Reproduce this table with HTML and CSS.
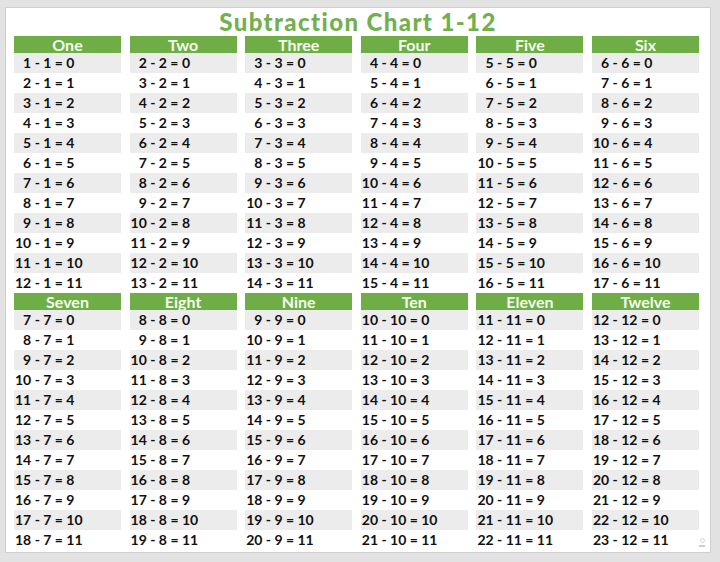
FILE: index.html
```html
<!DOCTYPE html>
<html lang="en">
<head>
<meta charset="utf-8">
<title>Subtraction Chart 1-12</title>
<link rel="stylesheet" href="styles.css">
</head>
<body>
<div class="sheet">
  <h1 class="title">Subtraction Chart 1-12</h1>
  <div class="band">
    <div class="col">
      <div class="head">One</div>
      <div class="row s">1 - 1 = 0</div><div class="row s">2 - 1 = 1</div><div class="row s">3 - 1 = 2</div><div class="row s">4 - 1 = 3</div><div class="row s">5 - 1 = 4</div><div class="row s">6 - 1 = 5</div><div class="row s">7 - 1 = 6</div><div class="row s">8 - 1 = 7</div><div class="row s">9 - 1 = 8</div><div class="row">10 - 1 = 9</div><div class="row">11 - 1 = 10</div><div class="row">12 - 1 = 11</div>
    </div>
    <div class="col">
      <div class="head">Two</div>
      <div class="row s">2 - 2 = 0</div><div class="row s">3 - 2 = 1</div><div class="row s">4 - 2 = 2</div><div class="row s">5 - 2 = 3</div><div class="row s">6 - 2 = 4</div><div class="row s">7 - 2 = 5</div><div class="row s">8 - 2 = 6</div><div class="row s">9 - 2 = 7</div><div class="row">10 - 2 = 8</div><div class="row">11 - 2 = 9</div><div class="row">12 - 2 = 10</div><div class="row">13 - 2 = 11</div>
    </div>
    <div class="col">
      <div class="head">Three</div>
      <div class="row s">3 - 3 = 0</div><div class="row s">4 - 3 = 1</div><div class="row s">5 - 3 = 2</div><div class="row s">6 - 3 = 3</div><div class="row s">7 - 3 = 4</div><div class="row s">8 - 3 = 5</div><div class="row s">9 - 3 = 6</div><div class="row">10 - 3 = 7</div><div class="row">11 - 3 = 8</div><div class="row">12 - 3 = 9</div><div class="row">13 - 3 = 10</div><div class="row">14 - 3 = 11</div>
    </div>
    <div class="col">
      <div class="head">Four</div>
      <div class="row s">4 - 4 = 0</div><div class="row s">5 - 4 = 1</div><div class="row s">6 - 4 = 2</div><div class="row s">7 - 4 = 3</div><div class="row s">8 - 4 = 4</div><div class="row s">9 - 4 = 5</div><div class="row">10 - 4 = 6</div><div class="row">11 - 4 = 7</div><div class="row">12 - 4 = 8</div><div class="row">13 - 4 = 9</div><div class="row">14 - 4 = 10</div><div class="row">15 - 4 = 11</div>
    </div>
    <div class="col">
      <div class="head">Five</div>
      <div class="row s">5 - 5 = 0</div><div class="row s">6 - 5 = 1</div><div class="row s">7 - 5 = 2</div><div class="row s">8 - 5 = 3</div><div class="row s">9 - 5 = 4</div><div class="row">10 - 5 = 5</div><div class="row">11 - 5 = 6</div><div class="row">12 - 5 = 7</div><div class="row">13 - 5 = 8</div><div class="row">14 - 5 = 9</div><div class="row">15 - 5 = 10</div><div class="row">16 - 5 = 11</div>
    </div>
    <div class="col">
      <div class="head">Six</div>
      <div class="row s">6 - 6 = 0</div><div class="row s">7 - 6 = 1</div><div class="row s">8 - 6 = 2</div><div class="row s">9 - 6 = 3</div><div class="row">10 - 6 = 4</div><div class="row">11 - 6 = 5</div><div class="row">12 - 6 = 6</div><div class="row">13 - 6 = 7</div><div class="row">14 - 6 = 8</div><div class="row">15 - 6 = 9</div><div class="row">16 - 6 = 10</div><div class="row">17 - 6 = 11</div>
    </div>
  </div>
  <div class="band">
    <div class="col">
      <div class="head">Seven</div>
      <div class="row s">7 - 7 = 0</div><div class="row s">8 - 7 = 1</div><div class="row s">9 - 7 = 2</div><div class="row">10 - 7 = 3</div><div class="row">11 - 7 = 4</div><div class="row">12 - 7 = 5</div><div class="row">13 - 7 = 6</div><div class="row">14 - 7 = 7</div><div class="row">15 - 7 = 8</div><div class="row">16 - 7 = 9</div><div class="row">17 - 7 = 10</div><div class="row">18 - 7 = 11</div>
    </div>
    <div class="col">
      <div class="head">Eight</div>
      <div class="row s">8 - 8 = 0</div><div class="row s">9 - 8 = 1</div><div class="row">10 - 8 = 2</div><div class="row">11 - 8 = 3</div><div class="row">12 - 8 = 4</div><div class="row">13 - 8 = 5</div><div class="row">14 - 8 = 6</div><div class="row">15 - 8 = 7</div><div class="row">16 - 8 = 8</div><div class="row">17 - 8 = 9</div><div class="row">18 - 8 = 10</div><div class="row">19 - 8 = 11</div>
    </div>
    <div class="col">
      <div class="head">Nine</div>
      <div class="row s">9 - 9 = 0</div><div class="row">10 - 9 = 1</div><div class="row">11 - 9 = 2</div><div class="row">12 - 9 = 3</div><div class="row">13 - 9 = 4</div><div class="row">14 - 9 = 5</div><div class="row">15 - 9 = 6</div><div class="row">16 - 9 = 7</div><div class="row">17 - 9 = 8</div><div class="row">18 - 9 = 9</div><div class="row">19 - 9 = 10</div><div class="row">20 - 9 = 11</div>
    </div>
    <div class="col">
      <div class="head">Ten</div>
      <div class="row">10 - 10 = 0</div><div class="row">11 - 10 = 1</div><div class="row">12 - 10 = 2</div><div class="row">13 - 10 = 3</div><div class="row">14 - 10 = 4</div><div class="row">15 - 10 = 5</div><div class="row">16 - 10 = 6</div><div class="row">17 - 10 = 7</div><div class="row">18 - 10 = 8</div><div class="row">19 - 10 = 9</div><div class="row">20 - 10 = 10</div><div class="row">21 - 10 = 11</div>
    </div>
    <div class="col">
      <div class="head">Eleven</div>
      <div class="row">11 - 11 = 0</div><div class="row">12 - 11 = 1</div><div class="row">13 - 11 = 2</div><div class="row">14 - 11 = 3</div><div class="row">15 - 11 = 4</div><div class="row">16 - 11 = 5</div><div class="row">17 - 11 = 6</div><div class="row">18 - 11 = 7</div><div class="row">19 - 11 = 8</div><div class="row">20 - 11 = 9</div><div class="row">21 - 11 = 10</div><div class="row">22 - 11 = 11</div>
    </div>
    <div class="col">
      <div class="head">Twelve</div>
      <div class="row">12 - 12 = 0</div><div class="row">13 - 12 = 1</div><div class="row">14 - 12 = 2</div><div class="row">15 - 12 = 3</div><div class="row">16 - 12 = 4</div><div class="row">17 - 12 = 5</div><div class="row">18 - 12 = 6</div><div class="row">19 - 12 = 7</div><div class="row">20 - 12 = 8</div><div class="row">21 - 12 = 9</div><div class="row">22 - 12 = 10</div><div class="row">23 - 12 = 11</div>
    </div>
  </div>
  <div class="mark"><span class="mark-dot"></span><span class="mark-bar"></span></div>
</div>
</body>
</html>
```

FILE: styles.css
```css
html, body {
  margin: 0;
  padding: 0;
}
body {
  background: #e2e2e2;
  width: 720px;
  height: 562px;
  overflow: hidden;
  padding-top: 7px;
  padding-left: 5px;
  box-sizing: border-box;
}
.sheet {
  position: relative;
  width: 706px;
  height: 546px;
  box-sizing: border-box;
  background: #ffffff;
  border: 1px solid #cfcfcf;
  padding: 0 0 0 8px;
}
.title {
  margin: 0;
  height: 28px;
  padding-top: 1px;
  box-sizing: border-box;
  line-height: 25px;
  text-align: center;
  font-family: "Lato", "Open Sans", sans-serif;
  font-weight: 900;
  font-size: 24px;
  letter-spacing: 1.4px;
  color: #72b04f;
  padding-right: 8px;
}
.band {
  display: grid;
  grid-template-columns: repeat(6, 107px);
  column-gap: 8.6px;
}
.col {
  display: flex;
  flex-direction: column;
}
.head {
  height: 17px;
  line-height: 17px;
  background: #6fae46;
  color: #f4fbef;
  text-align: center;
  font-family: "Lato", "Open Sans", sans-serif;
  font-weight: 700;
  font-size: 16px;
}
.row {
  height: 20px;
  line-height: 20px;
  padding-left: 1px;
  font-family: "Lato", "Open Sans", sans-serif;
  font-weight: 700;
  font-size: 14px;
  color: #111111;
  white-space: nowrap;
}
.row:nth-child(even) {
  background: #ececec;
}
.row.s {
  padding-left: calc(1px + 1ch);
}
.mark {
  position: absolute;
  right: 4px;
  bottom: 5px;
  width: 8px;
  display: flex;
  flex-direction: column;
  align-items: center;
  gap: 2px;
}
.mark-dot {
  width: 5px;
  height: 5px;
  border-radius: 50%;
  border: 1px solid #d8d8d8;
  box-sizing: border-box;
}
.mark-bar {
  width: 6px;
  height: 2px;
  background: #d9c8d8;
}
```
